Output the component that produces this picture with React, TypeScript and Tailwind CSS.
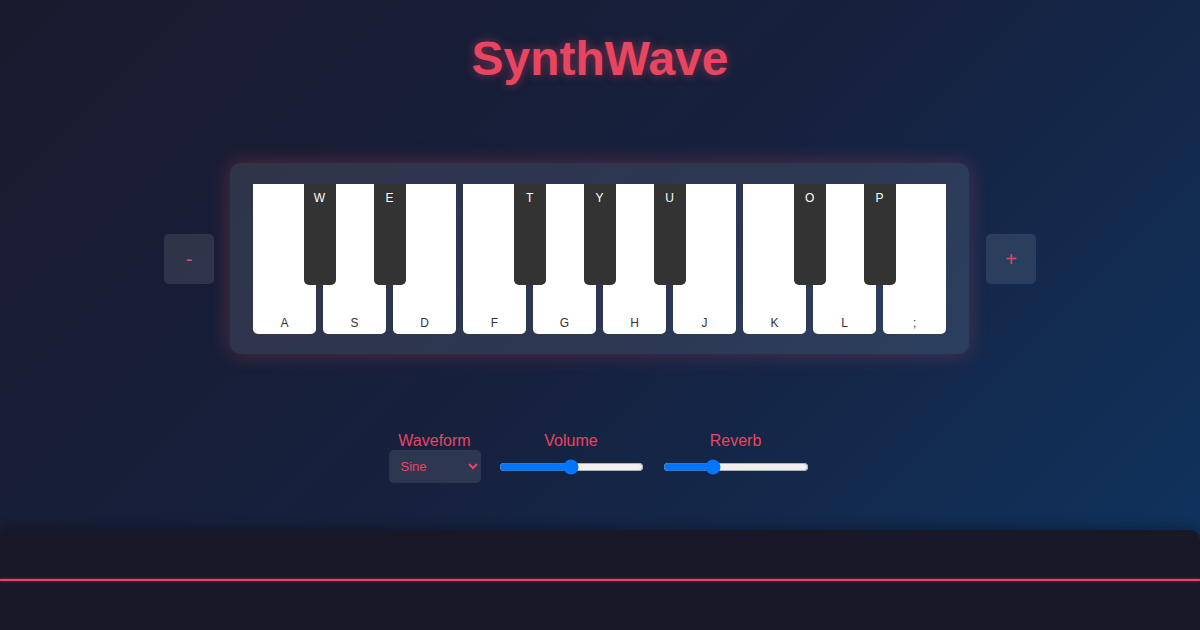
import React from "react";

const whiteKeys = ["A", "S", "D", "F", "G", "H", "J", "K", "L", ";"];
const blackAfter: Record<number, string> = { 0: "W", 1: "E", 3: "T", 4: "Y", 5: "U", 7: "O", 8: "P" };

export default function App() {
  return (
    <div
      className="relative flex h-[630px] w-full flex-col items-center overflow-hidden bg-[linear-gradient(135deg,#1a1a2e_0%,#16213e_50%,#0f3460_100%)]"
      style={{ fontFamily: '"Liberation Sans", Arial, sans-serif' }}
    >
      <h1 className="mt-[31px] text-[48px] font-bold leading-[55px] text-[#e94560] [text-shadow:0_0_10px_rgba(233,69,96,0.5)]">
        SynthWave
      </h1>

      <div className="mt-[77px] flex items-center">
        <button className="mr-[16px] flex h-[50px] w-[50px] items-center justify-center rounded-[5px] bg-white/10 text-[20px] text-[#e94560]">
          -
        </button>
        <div className="w-[739px] rounded-[10px] bg-white/10 px-[23px] pb-[20px] pt-[21px] shadow-[0_0_20px_rgba(233,69,96,0.3)]">
          <div className="flex gap-[7.1px]">
            {whiteKeys.map((k, i) => (
              <div
                key={k}
                className="relative flex h-[150px] w-[63px] items-end justify-center rounded-b-[5px] bg-white pb-[2px] text-[12px] text-[#333]"
              >
                {k}
                {blackAfter[i] && (
                  <div className="absolute left-[50.5px] top-0 z-10 flex h-[101px] w-[32px] justify-center rounded-b-[5px] bg-[#333] pt-[5px] text-[12px] text-white">
                    {blackAfter[i]}
                  </div>
                )}
              </div>
            ))}
          </div>
        </div>
        <button className="ml-[17px] flex h-[50px] w-[50px] items-center justify-center rounded-[5px] bg-white/10 text-[20px] text-[#e94560]">
          +
        </button>
      </div>

      <div className="mt-[77px] flex items-end pr-[3px]">
        <div className="mr-[18px] flex flex-col items-center">
          <label className="text-[16px] leading-[19px] text-[#e94560]">Waveform</label>
          <select
            defaultValue="sine"
            className="h-[33px] w-[92px] rounded-[5px] bg-white/10 px-[8px] text-[13px] text-[#e94560] outline-none"
          >
            <option value="sine">Sine</option>
            <option value="square">Square</option>
            <option value="sawtooth">Sawtooth</option>
            <option value="triangle">Triangle</option>
          </select>
        </div>
        <div className="mr-[19px] flex flex-col items-center">
          <label className="text-[16px] leading-[19px] text-[#e94560]">Volume</label>
          <div className="flex h-[33px] items-center">
            <input type="range" min={0} max={1} step={0.01} defaultValue={0.5} className="w-[145px]" />
          </div>
        </div>
        <div className="flex flex-col items-center">
          <label className="text-[16px] leading-[19px] text-[#e94560]">Reverb</label>
          <div className="flex h-[33px] items-center">
            <input type="range" min={0} max={1} step={0.01} defaultValue={0.33} className="w-[146px]" />
          </div>
        </div>
      </div>

      <div className="mt-auto flex h-[100px] w-full items-center rounded-t-[10px] bg-[#181829] shadow-[0_-4px_12px_rgba(0,0,0,0.25)]">
        <div className="h-[2px] w-full bg-[#e94560] shadow-[0_0_3px_rgba(233,69,96,0.6)]" />
      </div>
    </div>
  );
}
